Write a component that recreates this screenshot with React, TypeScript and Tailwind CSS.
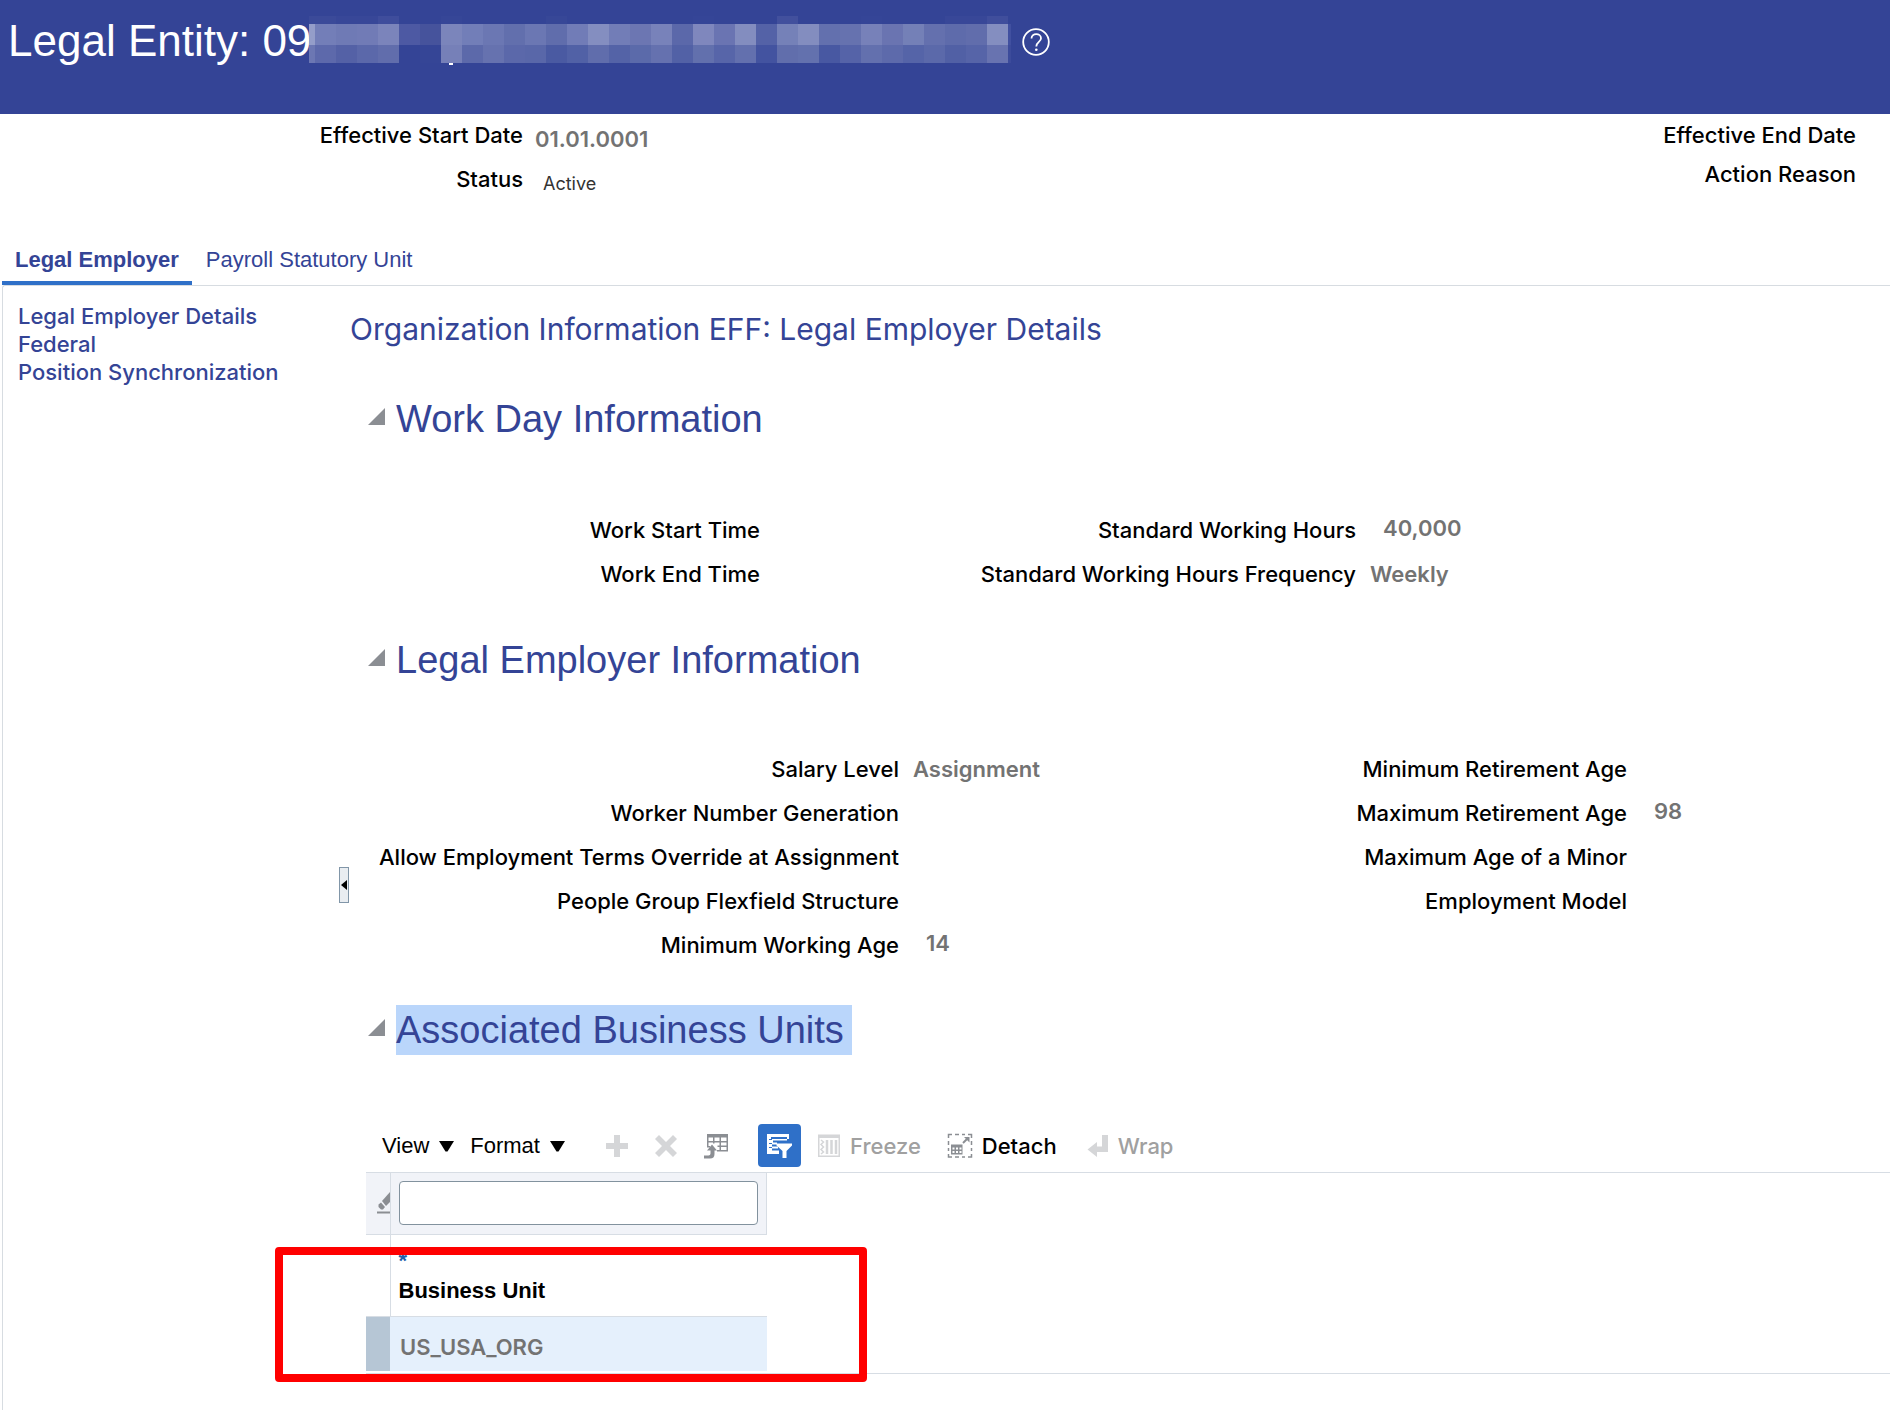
import type { ReactNode } from "react";

const MOSAIC_EDGE = [
  "#3b4a99", "#384798", "#384798", "#3f4d9c", "#344496", "#344496", "#364697", "#344496", "#344496",
  "#344496", "#344496", "#374797", "#344496", "#344496", "#344496", "#344496", "#344496", "#344496",
  "#354597", "#344496", "#344496", "#344496", "#42509d", "#344496", "#344496", "#344496", "#354597",
  "#344496", "#344496", "#344496", "#384798", "#384798", "#404e9c",
];
const MOSAIC_TOP = [
  "#737eb8", "#6f7ab5", "#717bb6", "#7b84bb", "#4d59a3", "#46539c", "#7b85bb", "#727eb8", "#6b77b3",
  "#626fad", "#6b77b3", "#606dac", "#717cb7", "#848ec0", "#727db7", "#6c76b2", "#7882ba", "#5b68aa",
  "#7f87bd", "#6a74b2", "#838dbf", "#5462a7", "#7581b8", "#838dbf", "#6370ae", "#6672af", "#7781b9",
  "#6a74b1", "#7480b7", "#6470ae", "#5e6bab", "#616dac", "#848ec0",
];
const MOSAIC_BOTTOM = [
  "#5d69ab", "#5461a6", "#5b68aa", "#616dac", "#344496", "#354596", "#7680b8", "#5c69aa", "#6672af",
  "#5b68aa", "#5967a9", "#4a5aa2", "#5161a6", "#606dac", "#5463a7", "#5b6aaa", "#6571af", "#5261a6",
  "#6270ad", "#5765a9", "#6370ae", "#4353a0", "#616eac", "#6371ae", "#4858a2", "#5563a8", "#6370ae",
  "#5d6aab", "#5564a8", "#5b69aa", "#5160a5", "#5664a8", "#6873b0",
];
const MOSAIC_ROWS = [
  { height: "h-2", start: "bg-[#3b4a99]", end: "bg-[#344496]", cells: MOSAIC_EDGE },
  { height: "h-[21px]", start: "bg-[#949dc9]", end: "bg-[#4150a0]", cells: MOSAIC_TOP },
  { height: "h-[18px]", start: "bg-[#6c77b3]", end: "bg-[#3c4b9b]", cells: MOSAIC_BOTTOM },
];

function Redacted() {
  return (
    <span aria-hidden="true" className="-ml-[2px] mt-4 flex flex-col">
      {MOSAIC_ROWS.map((row) => (
        <span key={row.height} className={`flex ${row.height}`}>
          <span className={`w-[6px] ${row.start}`} />
          {row.cells.map((c, i) => (
            <span key={i} className="w-[21px]" style={{ backgroundColor: c }} />
          ))}
          <span className={`w-[3px] ${row.end}`} />
        </span>
      ))}
      <span className="ml-[140px] h-[2px] w-1 bg-white" />
    </span>
  );
}

function Section({ title, selected, children }: { title: string; selected?: boolean; children: ReactNode }) {
  return (
    <section>
      <div className="flex h-12 items-center">
        <button type="button" aria-label={`Collapse ${title}`} className="mr-[10px] ml-[17px]">
          <svg width="19" height="19" viewBox="0 0 19 19" className="-mt-[6px] block">
            <path d="M18 1V18H1Z" fill="#8b8e93" />
          </svg>
        </button>
        <h2 className={`font-['Liberation_Sans',Arial,sans-serif] text-[38px] leading-[50px] text-[#344496] ${selected ? "bg-[#bad6fb] pr-2" : ""}`}>{title}</h2>
      </div>
      {children}
    </section>
  );
}

type Field = { label: string; value?: string; numeric?: boolean };

function Fields({ items, labelWidth }: { items: Field[]; labelWidth: string }) {
  return (
    <dl>
      {items.map((f) => (
        <div key={f.label} className="flex h-11 items-center">
          <dt className={`shrink-0 text-right whitespace-nowrap text-black ${labelWidth}`}>{f.label}</dt>
          <dd className={`font-semibold text-[#737373] ${f.numeric ? "pb-1 pl-[27px]" : "pl-[14px]"}`}>{f.value}</dd>
        </div>
      ))}
    </dl>
  );
}

function Caret() {
  return (
    <svg width="15" height="12" viewBox="0 0 15 12">
      <path d="M0 1H15L8.500 11.500H6.500Z" fill="#000" />
    </svg>
  );
}

function AddIcon() {
  return (
    <svg width="24" height="24" viewBox="0 0 24 24">
      <path d="M9 1h6v8h8v6h-8v8H9v-8H1V9h8z" fill="#d5d6d8" />
    </svg>
  );
}

function DeleteIcon() {
  return (
    <svg width="24" height="24" viewBox="0 0 24 24">
      <path d="M5 1l7 7 7-7 4 4-7 7 7 7-4 4-7-7-7 7-4-4 7-7-7-7z" fill="#d5d6d8" />
    </svg>
  );
}

function AddRowIcon() {
  return (
    <svg width="26" height="26" viewBox="0 0 26 26">
      <path d="M4 1H25V18.500H14V17H16.500V14H14.500V12.500H16.500V9.500H11.500V10.500H10V9.500H5.500V13H7V14.500H4ZM5.500 4.500V8H10V4.500ZM11.500 4.500V8H16.500V4.500ZM18 4.500V8H23.500V4.500ZM18 9.500V12.500H23.500V9.500ZM18 14V17H23.500V14Z" fill="#8b8e93" fillRule="evenodd" />
      <path d="M9 11.500L14 17.500H11.500V21Q11.500 25.500 7 25.500H1V22.500H5.500Q7.500 22.500 7.500 20.500V17.500H4Z" fill="#8b8e93" />
    </svg>
  );
}

function FilterIcon() {
  return (
    <svg width="26" height="26" viewBox="0 0 26 26">
      <path d="M1 1H23V6H21V4H5V6H21V7.500H7V9.500H11V11.500H6V13.500H12V15.500H6V17.500H13V21H1Z" fill="#fff" />
      <path d="M3 6.500H6M3 10.500H6M3 14.500H6" stroke="#2f70c8" strokeWidth="1" />
      <path d="M10.500 10.500H26V12.500L20.500 18V25H16.500V18L10.500 12.500Z" fill="#fff" />
    </svg>
  );
}

function FreezeIcon() {
  return (
    <svg width="24" height="24" viewBox="0 0 24 24">
      <path d="M1 0.500H23V23H1ZM2.500 4V21.500H21.500V4Z" fill="#d5d6d8" fillRule="evenodd" />
      <path d="M10 6V20M14.500 6V20M19 6V20" stroke="#d5d6d8" strokeWidth="2.500" />
      <path d="M4 6L6.500 8L4 10.500L6.500 13L4 15.500L6.500 18L4 20" stroke="#d5d6d8" strokeWidth="1.500" fill="none" />
    </svg>
  );
}

function DetachIcon() {
  return (
    <svg width="26" height="26" viewBox="0 0 26 26" fill="none" stroke="#8b8e93">
      <path d="M1.500 5V1.500H5M8 1.500H12M15 1.500H18M21 1.500H24.500V5M24.500 8V12M24.500 15V18M24.500 21V24H21M18 24H15M12 24H8M5 24H1.500V21M1.500 18V15M1.500 12V8" strokeWidth="1.500" />
      <path d="M4 11.500H15.500V21.500H4Z" fill="#8b8e93" stroke="none" />
      <path d="M5.500 15.500H7.500M9 15.500H11M12.500 15.500H14.500M5.500 19H7.500M9 19H11M12.500 19H14.500" stroke="#fff" strokeWidth="2" />
      <path d="M16 10L21.500 4.500" strokeWidth="2" />
      <path d="M17 4H22.500V9.500Z" fill="#8b8e93" stroke="none" />
    </svg>
  );
}

function WrapIcon() {
  return (
    <svg width="22" height="24" viewBox="0 0 22 24">
      <path d="M15 1H21V18H10V23L0.500 15.500L10 8V12.500H15Z" fill="#d5d6d8" />
    </svg>
  );
}

function EraserIcon() {
  return (
    <svg width="13" height="22" viewBox="0 0 13 22">
      <path d="M13 0V10L9 14L5 9Z" fill="#8b8e93" />
      <path d="M4 10.500L8 15L6 17.500H4L1.500 15V12.500Z" fill="#8b8e93" />
      <path d="M0 20.500H13" stroke="#8b8e93" strokeWidth="2" />
    </svg>
  );
}

export default function App() {
  return (
    <div className="min-h-screen overflow-x-hidden bg-white font-['Inter','Liberation_Sans',sans-serif] text-[22px] leading-7 font-medium text-black [&_h1]:font-normal [&_h2]:font-normal">
      <header className="flex h-[114px] items-start bg-[#344496] text-white">
        <h1 className="flex items-start pl-2">
          <span className="w-[303px] pt-4 font-['Liberation_Sans',Arial,sans-serif] text-[44px] leading-[50px] whitespace-nowrap">Legal Entity: 09</span>
          <Redacted />
        </h1>
        <button type="button" aria-label="Help" className="mt-7 ml-[11px]">
          <svg width="28" height="28" viewBox="0 0 28 28" fill="none" stroke="#fff">
            <circle cx="14" cy="14" r="12.800" strokeWidth="1.800" />
            <path d="M9.500 10.500C9.500 4.500 19 4.800 19 10.200C19 14 14.300 13.800 14.300 18.500" strokeWidth="1.800" />
            <circle cx="14.300" cy="21.800" r="1.300" fill="#fff" stroke="none" />
          </svg>
        </button>
      </header>

      <div className="flex justify-between pr-[34px]">
        <dl className="pt-[7px]">
          <div className="flex h-11">
            <dt className="w-[523px] text-right">Effective Start Date</dt>
            <dd className="pt-1 pl-3 font-semibold text-[#737373]">01.01.0001</dd>
          </div>
          <div className="flex h-11">
            <dt className="w-[523px] text-right">Status</dt>
            <dd className="pt-[5px] pl-5 text-[18px] font-normal text-[#333]">Active</dd>
          </div>
        </dl>
        <dl className="pt-[7px] text-right">
          <dt className="h-[39px]">Effective End Date</dt>
          <dt>Action Reason</dt>
        </dl>
      </div>

      <nav className="mt-[30px] flex pl-[2px] font-['Liberation_Sans',Arial,sans-serif] text-[#344496]">
        <a href="#legal-employer" className="h-[46px] border-b-4 border-[#2f70c8] px-[13px] pt-[7px] font-bold">Legal Employer</a>
        <a href="#payroll" className="h-[46px] px-[14px] pt-[7px] font-normal">Payroll Statutory Unit</a>
      </nav>

      <div className="ml-[2px] flex min-h-[1125px] rounded-tl-[3px] border-t border-l border-[#d7dce1]">
        <aside className="w-[336px] shrink-0 pt-4 pl-[15px] text-[#344496]">
          <ul>
            <li><a href="#details">Legal Employer Details</a></li>
            <li><a href="#federal">Federal</a></li>
            <li><a href="#sync">Position Synchronization</a></li>
          </ul>
        </aside>
        <button type="button" aria-label="Collapse panel" className="mt-[581px] flex h-9 w-[10px] shrink-0 items-center justify-center border border-[#8196a8] bg-[#e9edf1]">
          <svg width="6" height="10" viewBox="0 0 6 10">
            <path d="M6 0V10L0 5Z" fill="#000" />
          </svg>
        </button>

        <main className="min-w-0 flex-1 pt-[23px] pl-px">
          <p className="text-[30px] leading-10 font-normal text-[#344496]">Organization Information EFF: Legal Employer Details</p>

          <div className="pt-[46px]">
            <Section title="Work Day Information">
              <div className="flex pt-[65px] pb-[40px]">
                <Fields labelWidth="w-[410px]" items={[{ label: "Work Start Time" }, { label: "Work End Time" }]} />
                <Fields
                  labelWidth="w-[582px]"
                  items={[
                    { label: "Standard Working Hours", value: "40,000", numeric: true },
                    { label: "Standard Working Hours Frequency", value: "Weekly" },
                  ]}
                />
              </div>
            </Section>

            <Section title="Legal Employer Information">
              <div className="flex pt-[63px] pb-[39px]">
                <Fields
                  labelWidth="w-[549px]"
                  items={[
                    { label: "Salary Level", value: "Assignment" },
                    { label: "Worker Number Generation" },
                    { label: "Allow Employment Terms Override at Assignment" },
                    { label: "People Group Flexfield Structure" },
                    { label: "Minimum Working Age", value: "14", numeric: true },
                  ]}
                />
                <Fields
                  labelWidth="w-[587px]"
                  items={[
                    { label: "Minimum Retirement Age" },
                    { label: "Maximum Retirement Age", value: "98", numeric: true },
                    { label: "Maximum Age of a Minor" },
                    { label: "Employment Model" },
                  ]}
                />
              </div>
            </Section>

            <Section title="Associated Business Units" selected>
              <div className="ml-4 pt-[70px]">
                <div className="flex h-12 items-start pl-4 text-[#a0a0a0]">
                  <div className="flex h-[43px] items-center font-['Liberation_Sans',Arial,sans-serif] font-normal text-black">
                    <button type="button" className="flex items-center gap-[10px]">View <Caret /></button>
                    <button type="button" className="ml-4 flex items-center gap-[10px]">Format <Caret /></button>
                  </div>
                  <div className="ml-10 flex h-[43px] items-center gap-[25px]">
                    <button type="button" disabled aria-label="Add"><AddIcon /></button>
                    <button type="button" disabled aria-label="Delete"><DeleteIcon /></button>
                    <button type="button" aria-label="Add row"><AddRowIcon /></button>
                  </div>
                  <button type="button" aria-label="Query by example" className="ml-[29px] flex h-[43px] w-[43px] items-center justify-center rounded-[4px] bg-[#2f70c8]">
                    <FilterIcon />
                  </button>
                  <div className="ml-4 flex h-[43px] items-center">
                    <button type="button" disabled className="flex items-center gap-[9px]"><FreezeIcon />Freeze</button>
                    <button type="button" className="ml-[26px] flex items-center gap-[9px] text-black"><DetachIcon />Detach</button>
                    <button type="button" disabled className="ml-[30px] flex items-center gap-[9px]"><WrapIcon />Wrap</button>
                  </div>
                </div>

                <div className="relative h-[202px] border-y border-[#d7dde4]">
                  <table className="w-[401px] table-fixed border-collapse text-left">
                    <thead>
                      <tr className="h-[61px] border-b border-[#d7dde4] bg-[#f1f3f8]">
                        <td className="w-6 border-r border-[#d7dde4] p-0">
                          <button type="button" aria-label="Clear filter" className="ml-[11px] block overflow-hidden"><EraserIcon /></button>
                        </td>
                        <td className="border-r border-[#d7dde4] px-2 py-0">
                          <input type="text" aria-label="Filter by business unit" className="block h-11 w-full rounded-[4px] border border-[#82929e] bg-white px-2" />
                        </td>
                      </tr>
                      <tr className="h-[82px] border-b border-[#d7dde4]">
                        <td className="border-r border-[#d7dde4] p-0" />
                        <th scope="col" className="px-2 pt-3 pb-0 align-top font-['Liberation_Sans',Arial,sans-serif] leading-7 font-bold">
                          <span className="block h-[30px] text-[#2160aa]">*</span>
                          Business Unit
                        </th>
                      </tr>
                    </thead>
                    <tbody>
                      <tr className="h-[55px]">
                        <td className="bg-[#b6c6d5] p-0" />
                        <td className="bg-[#e5f0fc] px-[10px] py-0 pt-[6px] font-semibold text-[#737373]">US_USA_ORG</td>
                      </tr>
                    </tbody>
                  </table>
                  <div aria-hidden="true" className="absolute top-[74px] -left-[91px] h-[135px] w-[592px] rounded-[4px] border-[8px] border-[#ff0000]" />
                </div>
              </div>
            </Section>
          </div>
        </main>
      </div>
    </div>
  );
}
